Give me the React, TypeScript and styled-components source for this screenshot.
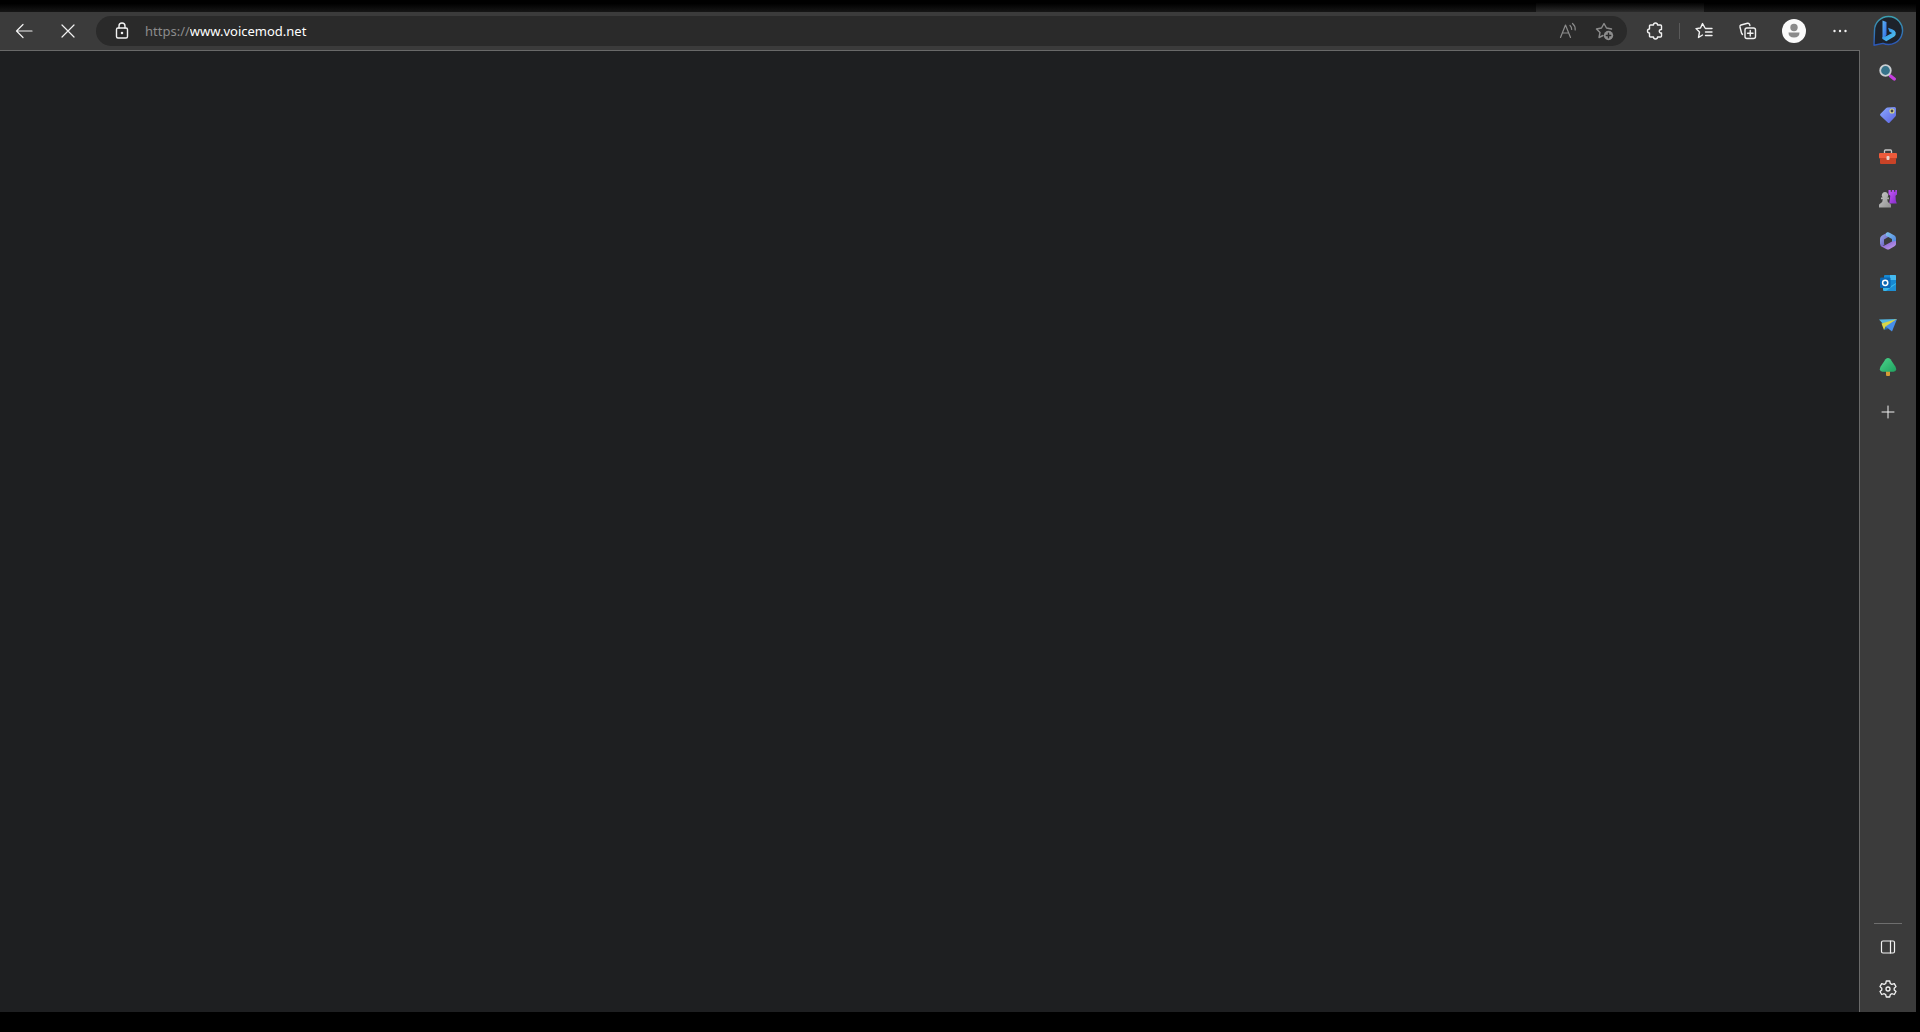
import React from "react";
import styled, { createGlobalStyle } from "styled-components";

const GlobalStyle = createGlobalStyle`
  * { box-sizing: border-box; }
  body { margin: 0; background: #000; font-family: "Noto Sans", "Open Sans", sans-serif; }
  button { border: 0; padding: 0; background: none; color: inherit; }
  svg { display: block; }
`;

const Window = styled.div`
  display: flex;
  flex-direction: column;
  height: 100vh;
  padding: 0 4px 20px 0;
  background: #000;
  color: #f2f2f2;
`;

const TabStrip = styled.div`
  display: flex;
  justify-content: flex-end;
  flex: none;
  height: 12px;
  padding-right: 212px;
  background: linear-gradient(#000 30%, #161616);
`;

const ActiveTab = styled.div`
  width: 168px;
  background: linear-gradient(#000 20%, #2c2c2c);
`;

const Toolbar = styled.header`
  display: flex;
  align-items: center;
  flex: none;
  gap: 12px;
  height: 38px;
  padding-left: 8px;
  background: #3b3b3b;
`;

const Group = styled.div<{ $gap: number }>`
  display: flex;
  align-items: center;
  gap: ${(p) => p.$gap}px;
`;

const ToolButton = styled.button<{ $size?: number; $dim?: boolean }>`
  display: grid;
  place-items: center;
  flex: none;
  width: ${(p) => p.$size ?? 32}px;
  height: ${(p) => p.$size ?? 32}px;
  color: ${(p) => (p.$dim ? "#8c8c8c" : "#f2f2f2")};
`;

const AddressBar = styled.form`
  display: flex;
  align-items: center;
  flex: 1;
  height: 30px;
  padding: 0 11px 0 16px;
  border-radius: 15px;
  background: #2a2a2a;
  font-size: 13px;
  line-height: 20px;
`;

const Scheme = styled.label`
  padding-left: 13px;
  color: #8c8c8c;
`;

const UrlInput = styled.input`
  flex: 1;
  min-width: 0;
  padding: 0;
  border: 0;
  outline: 0;
  background: none;
  color: #fff;
  font: inherit;
`;

const Divider = styled.span`
  width: 1px;
  height: 16px;
  background: #5a5a5a;
`;

const BingSlot = styled.div`
  display: grid;
  place-items: center;
  width: 56px;
  margin-left: -8px;
`;

const Body = styled.div`
  display: flex;
  flex: 1;
  min-height: 0;
`;

const Page = styled.main`
  flex: 1;
  border-top: 1px solid #696969;
  border-right: 1px solid #696969;
  background: #1e1f21;
`;

const Sidebar = styled.aside`
  display: flex;
  flex-direction: column;
  align-items: center;
  width: 56px;
  padding: 2px 0;
  background: #3b3b3b;
`;

const SideButton = styled.button<{ $tall?: boolean }>`
  display: grid;
  place-items: center;
  flex: none;
  width: 42px;
  height: ${(p) => (p.$tall ? 48 : 42)}px;
  color: #f2f2f2;
`;

const SideDivider = styled.hr`
  width: 28px;
  height: 1px;
  margin: auto 0 2px;
  border: 0;
  background: #6e6e6e;
`;

type LineProps = { size?: number; children: React.ReactNode; weight?: number };

const Line = ({ size = 20, weight = 1.2, children }: LineProps) => (
  <svg width={size} height={size} viewBox="0 0 20 20" fill="none" stroke="currentColor"
    strokeWidth={weight} strokeLinecap="round" strokeLinejoin="round" aria-hidden="true">
    {children}
  </svg>
);

const Art = ({ children }: { children: React.ReactNode }) => (
  <svg width="18" height="18" viewBox="0 0 18 18" aria-hidden="true">{children}</svg>
);

const Fade = ({ id, from, to }: { id: string; from: string; to: string }) => (
  <linearGradient id={id} x1="0" y1="0" x2="1" y2="1">
    <stop stopColor={from} /><stop offset="1" stopColor={to} />
  </linearGradient>
);

const BingLogo = () => (
  <svg width="32" height="32" viewBox="0 0 32 32" aria-hidden="true">
    <defs>
      <linearGradient id="bingRing" x1="0" y1="0" x2="0" y2="1">
        <stop stopColor="#3b9fb0" /><stop offset="1" stopColor="#2b56b8" />
      </linearGradient>
      <Fade id="bingB" from="#2b7de8" to="#56d0ee" />
      <Fade id="bingStem" from="#5bb4f2" to="#2f66e6" />
    </defs>
    <path d="M16.500 1.500A14 14 0 1 1 11 28.370L2 30.200 2.500 15.500A14 14 0 0 1 16.500 1.500Z"
      fill="#1d222b" stroke="url(#bingRing)" strokeWidth="1.400" strokeLinejoin="round" />
    <path d="M10.500 5.500 14.500 7V20l-4 4Z" fill="url(#bingStem)" />
    <path d="M10.500 22v2l3.800 2.300 8-4.700q1.900-1.400 1.400-4-.6-2.200-3-3L16 12.800l1.500 3.900 2.700 1.300-5.700 3Z" fill="url(#bingB)" />
  </svg>
);

const Search = () => (
  <Art>
    <path d="m11.500 12 3.800 3" stroke="#c63fe0" strokeWidth="3.400" strokeLinecap="round" />
    <circle cx="6.500" cy="6.500" r="5.300" fill="#36738a" stroke="#c9ced2" strokeWidth="1.800" />
  </Art>
);

const Shopping = () => (
  <Art>
    <defs><Fade id="tagFill" from="#8cabff" to="#5b62e0" /></defs>
    <path d="M8.500 1.500 15.500 1q1.500 0 1.500 1.500V9q0 .8-.6 1.400l-5.700 6.100q-1 1-2 0l-7.200-6.800q-1-1 0-2L7 2.200q.6-.6 1.500-.7Z" fill="url(#tagFill)" />
    <circle cx="13" cy="5" r="2" fill="#434343" stroke="#d8d58b" strokeWidth="1.100" />
  </Art>
);

const Tools = () => (
  <Art>
    <path d="M5.500 5V3q0-1 1-1h5q1 0 1 1v2" fill="none" stroke="#c8c8c8" strokeWidth="1.300" />
    <rect x="0" y="5" width="18" height="5.500" rx="1" fill="#ed5b3b" />
    <rect x="1" y="10" width="16" height="6" rx="1" fill="#c94327" />
    <rect x="7.500" y="8" width="3" height="4" rx="1" fill="#e8d3cc" />
  </Art>
);

const Games = () => (
  <Art>
    <defs>
      <Fade id="rookFill" from="#c659f8" to="#842cc8" />
      <Fade id="pawnFill" from="#c8c8c8" to="#919191" />
    </defs>
    <path d="M9.500 0h2.200v1.700h1.200V0h2.200v1.700h1.200V0H18v4.500l-1.500 1.200.3 4.800 1 3h-7.500l1-7.800L9.500 4.500Z" fill="url(#rookFill)" />
    <path d="M6 2a3.300 3.300 0 0 1 2.400 5.500H10v1.700H8.200q0 3.300 2.500 4.300 1.300.5 1.300 1.500v2.500H0V15q0-1 1.300-1.500 2.500-1 2.500-4.300H2V7.500h1.600A3.300 3.300 0 0 1 6 2Z" fill="url(#pawnFill)" />
  </Art>
);

const Microsoft365 = () => (
  <Art>
    <defs>
      <Fade id="officeTop" from="#7fc3ec" to="#487bdd" />
      <Fade id="officeLeft" from="#9cb2ee" to="#5c45b4" />
      <Fade id="officeBase" from="#7655ce" to="#c6a1eb" />
    </defs>
    <path d="M9 .3 3 3.500Q1 4.700 1 7v4.500q0 2 2 3l2.500-2q-.5-.7-.5-1.500V7.500L11 4Z" fill="url(#officeLeft)" />
    <path d="M7 1Q9-.3 11 1l4.500 2.500Q17 4.500 17 6.500v5q0 1.500-1.500 2.500L13 12.500V7L7 3.700Z" fill="url(#officeTop)" />
    <path d="M1.500 13q2 1.500 4.500.3l7-3.800 4-.5v2.500q0 1.800-1.500 2.700L10.800 17q-1.800 1-3.600 0l-4.700-2.600Q1.500 13.800 1.500 13Z" fill="url(#officeBase)" />
  </Art>
);

const Outlook = () => (
  <Art>
    <rect x="5" y="1" width="12" height="11" rx="1" fill="#1689d2" />
    <path d="M11 1h5q1 0 1 1v4h-6Z" fill="#45baf0" />
    <path d="M4 9.500 10.500 13 17 9v7q0 1-1 1H5q-1 0-1-1Z" fill="#39b9ec" />
    <path d="m7 17 10-7v6q0 1-1 1Z" fill="#1c8fd5" />
    <rect x="1" y="3.500" width="10.500" height="10.500" rx="1" fill="#0b67b3" />
    <circle cx="6.200" cy="8.800" r="2.600" fill="none" stroke="#fff" strokeWidth="1.500" />
  </Art>
);

const Drop = () => (
  <Art>
    <path d="M0 3.500 18 3 5 9Z" fill="#53b7e2" />
    <path d="m2.500 7.500 15.500-4.500-13 11Z" fill="#d7d646" />
    <path d="M18 3 13 15.500 6.500 10.500Z" fill="#478ee9" />
    <path d="m5 14 1.500-3.500 3 2.500Z" fill="#2868a8" />
  </Art>
);

const Tree = () => (
  <Art>
    <defs><Fade id="treeFill" from="#4bd58b" to="#20a260" /></defs>
    <path d="M7 12h4v5q0 1-1 1H8q-1 0-1-1Z" fill="#d79b35" />
    <path d="M6.500 1.200q2.500-2.400 5 0l5 7.500q2 4.500-2 5h-11q-4-.5-2-5Z" fill="url(#treeFill)" />
  </Art>
);

const sideApps = [
  { name: "Search", Icon: Search },
  { name: "Shopping", Icon: Shopping },
  { name: "Tools", Icon: Tools },
  { name: "Games", Icon: Games },
  { name: "Microsoft 365", Icon: Microsoft365 },
  { name: "Outlook", Icon: Outlook },
  { name: "Drop", Icon: Drop },
  { name: "E-tree", Icon: Tree },
];

export default function App() {
  return (
    <>
      <GlobalStyle />
      <Window>
        <TabStrip><ActiveTab /></TabStrip>
        <Toolbar>
          <ToolButton aria-label="Back">
            <Line><path d="M18 10H2.500M9 3.500 2.500 10 9 16.500" /></Line>
          </ToolButton>
          <ToolButton aria-label="Stop loading">
            <Line><path d="m4 4 12 12M16 4 4 16" /></Line>
          </ToolButton>
          <AddressBar onSubmit={(e) => e.preventDefault()}>
            <ToolButton type="button" $size={20} aria-label="Site information">
              <Line weight={1.4}>
                <rect x="4.500" y="7" width="11" height="10" rx="1.500" />
                <path d="M7 7V5a3 3 0 0 1 6 0v2" />
                <circle cx="10" cy="12" r=".6" fill="currentColor" />
              </Line>
            </ToolButton>
            <Scheme htmlFor="url">https://</Scheme>
            <UrlInput id="url" defaultValue="www.voicemod.net" spellCheck={false} />
            <Group $gap={12}>
              <ToolButton type="button" $size={24} $dim aria-label="Read aloud">
                <Line>
                  <path d="M2.500 16.500 7.500 4l5 12.500M4.300 12h6.400M12 4.500q1.700 1.500 1.700 4M14.500 2.500q3 2.500 2.700 6.500" />
                </Line>
              </ToolButton>
              <ToolButton type="button" $size={24} $dim aria-label="Add to favorites">
                <Line weight={1.4}>
                  <path d="M17.500 8 12.500 7 10 2.500 7.500 7l-5 1L6 11.500l-1 5 4-2" />
                  <circle cx="14.500" cy="14.500" r="4.700" fill="currentColor" stroke="none" />
                  <path d="M14.500 12.300v4.400M12.300 14.500h4.400" stroke="#2a2a2a" />
                </Line>
              </ToolButton>
            </Group>
          </AddressBar>
          <Group $gap={8}>
            <ToolButton aria-label="Extensions">
              <Line weight={1.4}>
                <path d="M5.500 4h3a2 2 0 0 1 4 0h3q1 0 1 1v3.500a1.800 1.800 0 1 0 0 3.500v3q0 1-1 1h-3a2 2 0 0 1-4 0h-3q-1 0-1-1v-3a2 2 0 0 1 0-4V5q0-1 1-1Z" />
              </Line>
            </ToolButton>
            <Divider />
            <ToolButton aria-label="Favorites">
              <Line weight={1.4}>
                <path d="M11 7 8.500 2.500 6.500 7l-4.500.6L5.500 11l-1 5.500 4-2.500M11.500 7.500H18M11.500 11H18M11.500 14.500H18" />
              </Line>
            </ToolButton>
          </Group>
          <Group $gap={14}>
            <ToolButton aria-label="Collections">
              <Line weight={1.4}>
                <rect x="7" y="7" width="10.500" height="10.500" rx="2" />
                <path d="M12.250 9.500v5.500M9.500 12.250h5.500M4.500 13.500 3.500 12 2 6q-.3-1.500 1-2l6.500-1.700q1.500-.3 2 1l.4 1.200" />
              </Line>
            </ToolButton>
            <ToolButton aria-label="Profile">
              <svg width="24" height="24" viewBox="0 0 24 24" aria-hidden="true">
                <circle cx="12" cy="12" r="12" fill="#fafafa" />
                <circle cx="12" cy="8.500" r="3.700" fill="#8a8a8a" />
                <path d="M6.500 13.500h11q0 5-5.500 5t-5.500-5Z" fill="#8a8a8a" />
              </svg>
            </ToolButton>
            <ToolButton aria-label="Settings and more">
              <svg width="20" height="20" viewBox="0 0 20 20" fill="currentColor" aria-hidden="true">
                <circle cx="4.500" cy="10" r="1.200" /><circle cx="10" cy="10" r="1.200" /><circle cx="15.500" cy="10" r="1.200" />
              </svg>
            </ToolButton>
          </Group>
          <BingSlot><ToolButton aria-label="Discover"><BingLogo /></ToolButton></BingSlot>
        </Toolbar>
        <Body>
          <Page />
          <Sidebar>
            {sideApps.map(({ name, Icon }) => (
              <SideButton key={name} aria-label={name}><Icon /></SideButton>
            ))}
            <SideButton $tall aria-label="Customize">
              <Line weight={1}><path d="M10 4v12M4 10h12" /></Line>
            </SideButton>
            <SideDivider />
            <SideButton aria-label="Hide sidebar">
              <Line weight={1.2}>
                <rect x="3.500" y="4" width="13" height="12" rx="1.500" /><path d="M12.500 4v12" />
              </Line>
            </SideButton>
            <SideButton aria-label="Settings">
              <Line weight={1.3}>
                <path d="M8.300 2h3.400l.6 2.500 1.500.9 2.500-.8 1.700 3-1.800 1.700v1.600l1.800 1.600-1.700 3-2.500-.8-1.500.9-.6 2.400H8.300l-.6-2.400-1.500-.9-2.500.8-1.700-3 1.800-1.600V9.300L2 7.600l1.700-3 2.500.8 1.500-.9Z" />
                <circle cx="10" cy="10" r="2" />
              </Line>
            </SideButton>
          </Sidebar>
        </Body>
      </Window>
    </>
  );
}
